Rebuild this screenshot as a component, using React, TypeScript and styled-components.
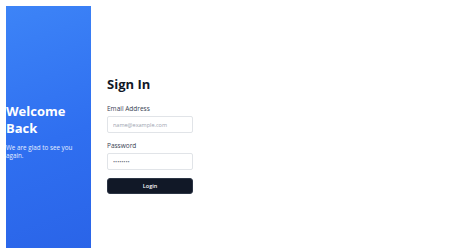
import * as React from "react";
import styled, { createGlobalStyle } from "styled-components";

const GlobalStyles = createGlobalStyle`
  html, body {
    margin: 0;
    padding: 0;
    height: 100%;
    background: #ffffff;
    font-family: "Open Sans", "Noto Sans", sans-serif;
  }
  #root {
    height: 100%;
  }
  * {
    box-sizing: border-box;
  }
`;

const Page = styled.div`
  display: flex;
  height: 100%;
  padding: 6px 0 0 6px;
`;

const Hero = styled.div`
  width: 85px;
  display: flex;
  flex-direction: column;
  justify-content: center;
  padding-top: 8px;
  background: linear-gradient(160deg, #3d84f7 0%, #2f6ff0 55%, #2a64e8 100%);
  color: #ffffff;
`;

const HeroTitle = styled.h1`
  margin: 0;
  font-size: 13px;
  line-height: 17px;
  font-weight: 700;
`;

const HeroText = styled.p`
  margin: 7px 0 0;
  font-size: 6.3px;
  line-height: 8px;
  color: #e6eeff;
`;

const FormArea = styled.div`
  display: flex;
  flex-direction: column;
  margin-left: 16px;
  width: 86px;
  padding-top: 69px;
`;

const Title = styled.h2`
  margin: 0 0 11px;
  font-size: 13px;
  line-height: 18px;
  font-weight: 700;
  color: #111827;
`;

const Field = styled.label`
  display: flex;
  flex-direction: column;
  margin-bottom: 8px;
`;

const Label = styled.span`
  font-size: 6.5px;
  line-height: 9px;
  color: #374151;
  margin-bottom: 3px;
`;

const Input = styled.input`
  height: 17px;
  width: 100%;
  border: 1px solid #e1e4e8;
  border-radius: 2px;
  padding: 0 5px;
  font-family: inherit;
  font-size: 5.5px;
  color: #6b7280;
  outline: none;
  &::placeholder {
    color: #9ca3af;
  }
`;

const Button = styled.button`
  height: 16px;
  width: 100%;
  border: 1px solid #2b3444;
  border-radius: 3px;
  background: #111827;
  color: #ffffff;
  font-family: inherit;
  font-size: 5.5px;
  font-weight: 600;
  cursor: pointer;
`;

export default function App() {
  return (
    <Page>
      <GlobalStyles />
      <Hero>
        <HeroTitle>
          Welcome
          <br />
          Back
        </HeroTitle>
        <HeroText>We are glad to see you again.</HeroText>
      </Hero>
      <FormArea>
        <Title>Sign In</Title>
        <Field>
          <Label>Email Address</Label>
          <Input type="email" placeholder="name@example.com" />
        </Field>
        <Field>
          <Label>Password</Label>
          <Input type="password" defaultValue="password" />
        </Field>
        <Button>Login</Button>
      </FormArea>
    </Page>
  );
}
